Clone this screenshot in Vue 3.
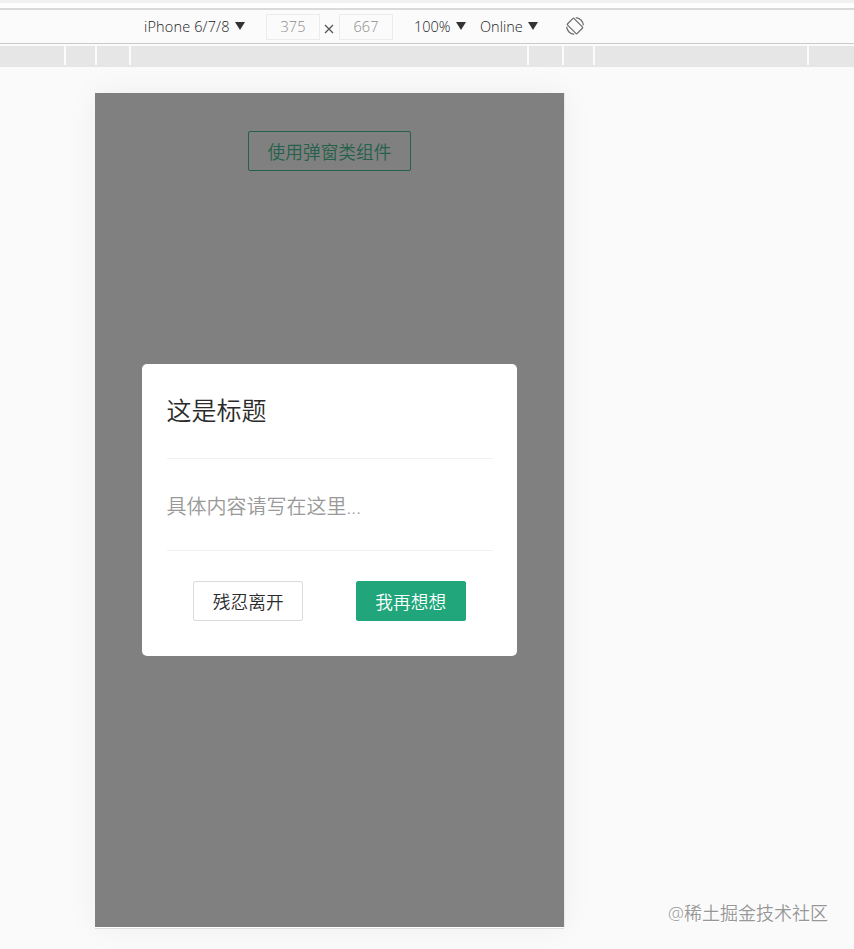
<script setup>
const tickWidths = [64, 29, 32, 396, 33, 29, 212]
</script>

<template>
  <div class="page">
    <div class="tabline"></div>
    <header class="toolbar">
      <span class="select device">iPhone 6/7/8<i class="arrow"></i></span>
      <span class="size">375</span>
      <svg class="times" viewBox="0 0 10 10"><path d="M1 1 9 9M9 1 1 9" /></svg>
      <span class="size">667</span>
      <span class="select zoom">100%<i class="arrow"></i></span>
      <span class="select network">Online<i class="arrow"></i></span>
      <svg class="rotate" viewBox="0 0 20 20">
        <rect x="5.4" y="3.2" width="9.2" height="13.6" rx="1" transform="rotate(-45 10 10)" />
        <path d="M10.8 1.6A8.4 8.4 0 0 1 18.4 9.2M9.2 18.4A8.4 8.4 0 0 1 1.6 10.8" />
      </svg>
    </header>
    <div class="ruler">
      <span v-for="(w, i) in tickWidths" :key="i" class="tick" :style="{ width: w + 'px' }"></span>
    </div>
    <main class="stage">
      <div class="phone">
        <button class="btn trigger">使用弹窗类组件</button>
        <section class="modal">
          <h2>这是标题</h2>
          <p>具体内容请写在这里...</p>
          <footer>
            <button class="btn leave">残忍离开</button>
            <button class="btn primary">我再想想</button>
          </footer>
        </section>
      </div>
    </main>
    <div class="watermark">@稀土掘金技术社区</div>
  </div>
</template>

<style>
body {
  background: #fafafa;
}
</style>

<style scoped>
.page {
  position: relative;
  box-sizing: border-box;
  width: 854px;
  height: 949px;
  overflow: hidden;
  background: #fafafa;
  font-family: "Open Sans", "Noto Sans CJK SC", sans-serif;
  font-weight: 350;
}
.tabline {
  box-sizing: border-box;
  height: 10px;
  background: #fff;
  border-top: 3px solid #f1f1f1;
  border-bottom: 2px solid #dadada;
}
.toolbar {
  box-sizing: border-box;
  height: 34px;
  padding-left: 144px;
  display: flex;
  align-items: center;
  background: #fbfbfb;
  border-bottom: 1px solid #c8cac9;
  color: #222;
  font-size: 14.5px;
}
.select {
  display: flex;
  align-items: center;
  white-space: nowrap;
  line-height: 20px;
}
.device {
  width: 122px;
  letter-spacing: 0.15px;
}
.zoom { width: 66px; margin-left: 21px; }
.network { width: 86px; }
.arrow {
  margin: -2px 0 0 5px;
  border: 4.5px solid transparent;
  border-width: 8px 5px 0;
  border-top-color: #333;
}
.size {
  box-sizing: border-box;
  width: 54px;
  height: 26px;
  line-height: 24px;
  text-align: center;
  border: 1px solid #ececec;
  color: #8c8c8c;
}
.times {
  width: 10px;
  height: 10px;
  margin: 5px 5px 0 4px;
  fill: none;
  stroke: #555;
  stroke-width: 1.3;
}
.rotate {
  width: 20px;
  height: 20px;
  margin: -1px 0 0 -1px;
  fill: none;
  stroke: #707070;
  stroke-width: 1.3;
}
.ruler {
  box-sizing: border-box;
  height: 23px;
  display: flex;
  background: #e6e6e6;
  border-top: 2px solid #fbfbfb;
}
.tick {
  flex: none;
  height: 19px;
  border-right: 2px solid #fbfbfb;
}
.stage {
  padding: 26px 0 0 95px;
}
.phone {
  box-sizing: border-box;
  width: 469px;
  height: 834px;
  padding-top: 38px;
  display: flex;
  flex-direction: column;
  align-items: center;
  background: #808080;
  box-shadow: 0 1px 0 #fff, 0 2px 0 #dedede, 1px 0 0 #e8e8e8, 0 0 30px rgba(0, 0, 0, 0.05);
}
.btn {
  box-sizing: border-box;
  width: 110px;
  height: 40px;
  padding: 1px 0 0;
  border: 1px solid #d8dcda;
  border-radius: 2px;
  background: #fff;
  color: #2b2b2b;
  font-family: inherit;
  font-weight: 350;
  font-size: 17.7px;
  line-height: 36px;
  white-space: nowrap;
}
.trigger {
  width: 163px;
  background: transparent;
  border-color: #24604a;
  color: #24604a;
}
.modal {
  box-sizing: border-box;
  width: 375px;
  height: 292px;
  margin-top: 193px;
  padding: 0 24px 0 25px;
  border-radius: 5px;
  background: #fff;
}
h2,
p {
  box-sizing: border-box;
  margin: 0;
  font-weight: 350;
  border-bottom: 1px solid #f0f0f0;
}
h2 {
  height: 95px;
  line-height: 92px;
  font-size: 25px;
  text-indent: -0.4px;
  color: #2b2b2b;
}
p {
  height: 92px;
  line-height: 95px;
  font-size: 20px;
  text-indent: -0.4px;
  color: #999;
}
footer {
  padding: 30px 1px 0 0;
  display: flex;
  justify-content: space-around;
}
.primary {
  background: #20a67a;
  border-color: #20a67a;
  color: #fff;
}
.watermark {
  position: absolute;
  left: 668px;
  top: 901px;
  font-size: 18px;
  line-height: 25px;
  color: #979797;
  text-shadow: 1px 1px 0 #fff;
  white-space: nowrap;
}
</style>
